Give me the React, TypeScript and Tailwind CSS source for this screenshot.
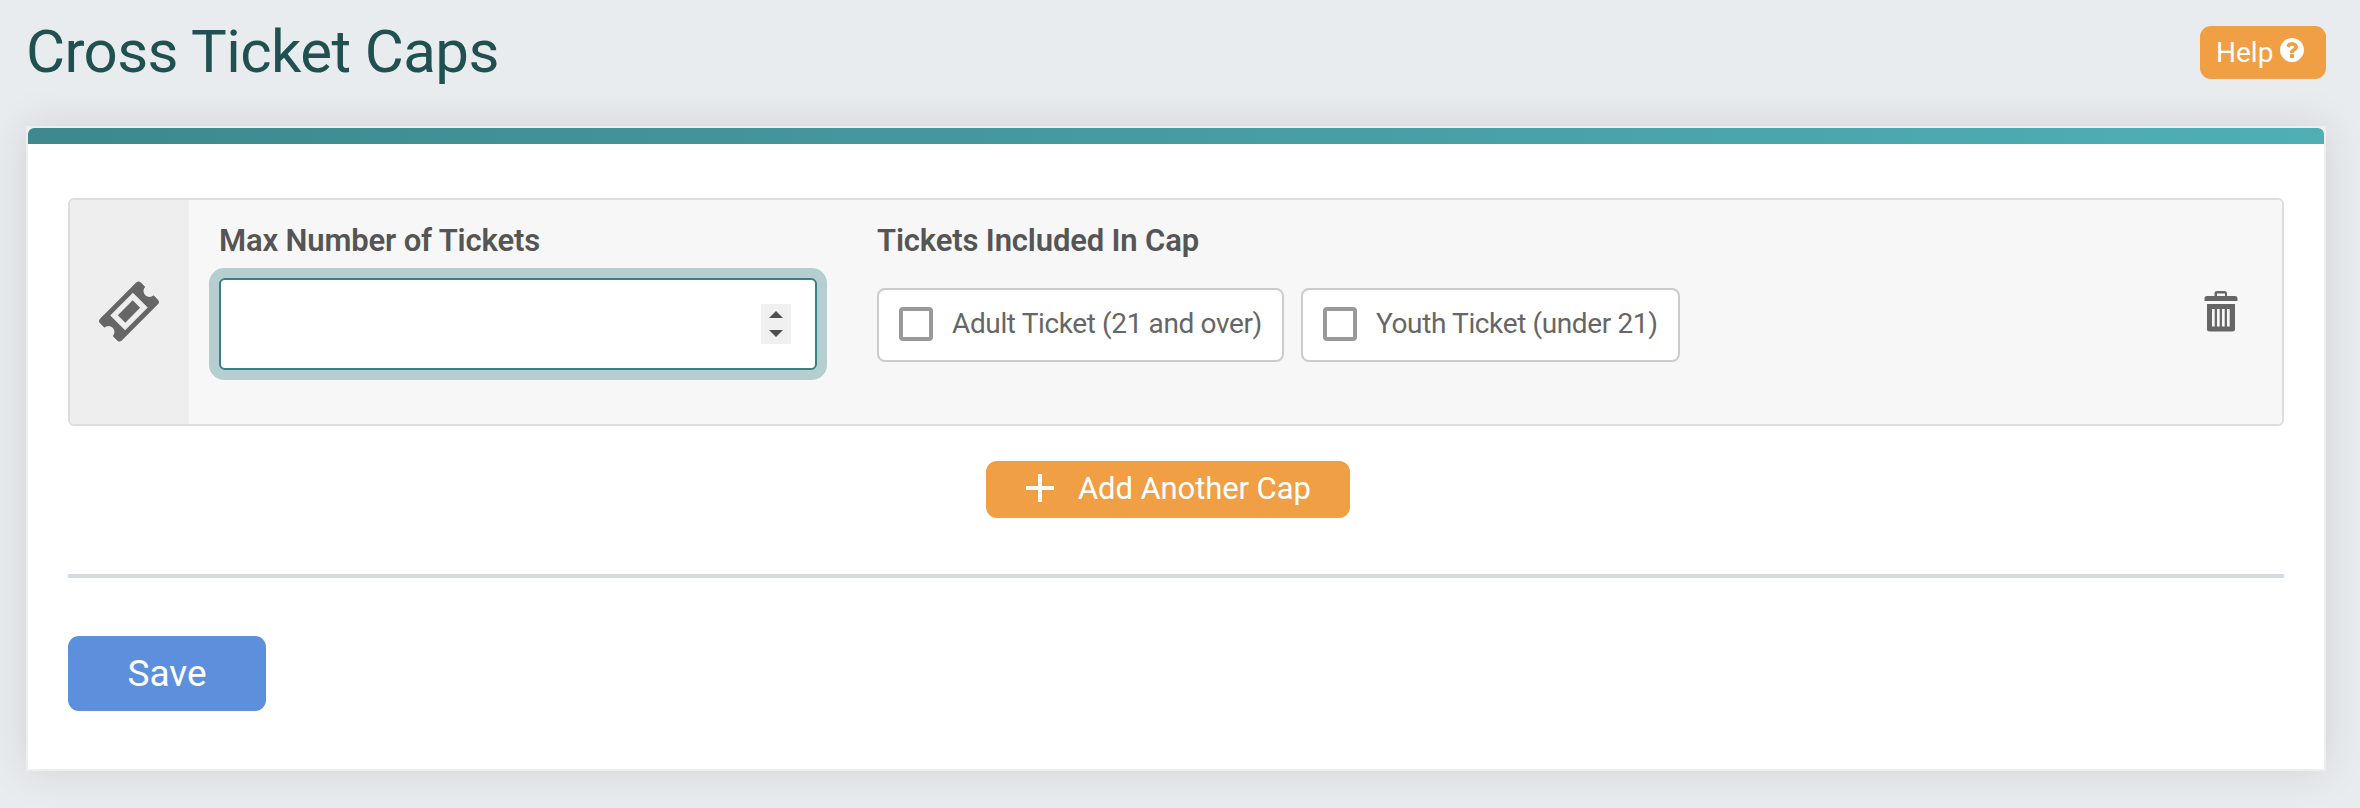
import React from 'react';

const TICKETS = ['Adult Ticket (21 and over)', 'Youth Ticket (under 21)'];

function HelpIcon() {
  return (
    <svg width="28" height="28" viewBox="0 0 1792 1792" fill="currentColor" className="ml-[5px] -mt-[5px]">
      <path d="M1024 1376v-192q0-14-9-23t-23-9h-192q-14 0-23 9t-9 23v192q0 14 9 23t23 9h192q14 0 23-9t9-23zm256-672q0-88-55.5-163t-138.5-116-170-41q-243 0-371 213-15 24 8 42l132 100q7 6 19 6 16 0 25-12 53-68 86-92 34-24 86-24 48 0 85.500 26t37.500 59q0 38-20 61t-68 45q-63 28-115.500 86.500t-52.500 125.500v36q0 14 9 23t23 9h192q14 0 23-9t9-23q0-19 21.500-49.500t54.500-49.500q32-18 49-28.500t46-35 44.500-48 28-60.500 12.500-81zm384 192q0 209-103 385.500t-279.500 279.500-385.500 103-385.500-103-279.500-279.500-103-385.500 103-385.500 279.500-279.500 385.500-103 385.500 103 279.500 279.500 103 385.500z" />
    </svg>
  );
}

function TicketIcon() {
  return (
    <svg width="58" height="31" viewBox="0 0 58 31" fill="currentColor" className="-rotate-45">
      <path
        fillRule="evenodd"
        d="M4 0H54Q58 0 58 4V9.500A6 6 0 0 0 58 21.500V27Q58 31 54 31H4Q0 31 0 27V21.500A6 6 0 0 0 0 9.500V4Q0 0 4 0ZM13 5V26H45V5ZM18.500 10.250H39.500V20.750H18.500Z"
      />
    </svg>
  );
}

function TrashIcon() {
  return (
    <svg width="34" height="42" viewBox="0 0 34 42" fill="#666666">
      <path fillRule="evenodd" d="M10.500 5V2.500Q10.500 0 13 0H20.500Q23 0 23 2.500V5H31Q33.500 5 33.500 7.500V10H0.500V7.500Q0.500 5 3 5ZM13 2.500V5H21V2.500Z" />
      <path fillRule="evenodd" d="M3 13H31V38Q31 40.500 28.500 40.500H5.500Q3 40.500 3 38ZM8 18V35.500H10.700V18ZM13 18V35.500H15.700V18ZM18 18V35.500H20.700V18ZM23 18V35.500H25.700V18Z" />
    </svg>
  );
}

export default function App() {
  return (
    <div className="h-[808px] w-[2360px] overflow-hidden bg-[#e8ecef] font-['Roboto',sans-serif] pl-[26px] pr-[34px]">
      <header className="flex h-[126px] items-start justify-between">
        <h1 className="pt-[17px] text-[60px] leading-[70px] tracking-[-0.6px] text-[#205050]">Cross Ticket Caps</h1>
        <button className="mt-[26px] flex h-[53px] w-[126px] items-center rounded-[11px] bg-[#f09f45] pl-4 text-[28px] text-white">
          Help
          <HelpIcon />
        </button>
      </header>

      <main className="h-[645px] border-2 border-[#eeeeee] bg-white shadow-[0_0_40px_rgba(0,0,0,0.1)]">
        <div className="h-4 rounded-t-md bg-linear-to-r from-[#3d898d] to-[#4fafb5]" />

        <div className="px-10 pt-[54px]">
          <section className="flex h-[228px] overflow-hidden rounded-md border-2 border-[#dddddd] bg-[#f7f7f7]">
            <div className="flex w-[119px] items-center justify-center bg-[#eeeeee] pb-px pr-px text-[#666666]">
              <TicketIcon />
            </div>

            <div className="ml-[30px] w-[598px] pt-[21px]">
              <label className="block text-[31px] font-semibold leading-[40px] tracking-[-0.15px] text-[#555555]">Max Number of Tickets</label>
              <div className="mt-[17px] flex h-[92px] items-center justify-end rounded-md border-2 border-[#3a7f83] bg-white pr-6 shadow-[0_0_0_10px_#b5cecf]">
                <div className="flex h-10 w-[30px] flex-col items-center justify-between bg-[#f0f0f0] py-[7px]">
                  <svg width="14" height="7" viewBox="0 0 14 7" fill="#505050"><path d="M0 7L7 0L14 7Z" /></svg>
                  <svg width="14" height="7" viewBox="0 0 14 7" fill="#505050"><path d="M0 0L7 7L14 0Z" /></svg>
                </div>
              </div>
            </div>

            <div className="ml-[60px] pt-[21px]">
              <h2 className="text-[31px] font-semibold leading-[40px] tracking-[-0.15px] text-[#555555]">Tickets Included In Cap</h2>
              <div className="mt-[27px] flex gap-[17px]">
                {TICKETS.map((name) => (
                  <label key={name} className="flex h-[74px] items-center rounded-lg border-2 border-[#cccccc] bg-white px-5 pb-[2px] text-[28px] tracking-[-0.37px] text-[#666666]">
                    <span className="mr-[19px] h-[34px] w-[34px] rounded-[4px] border-4 border-[#999999]" />
                    <span>{name}</span>
                  </label>
                ))}
              </div>
            </div>

            <div className="ml-auto mr-[44px] flex items-center">
              <TrashIcon />
            </div>
          </section>

          <div className="pl-[918px] pt-[35px]">
            <button className="flex h-[57px] w-[364px] items-center rounded-[11px] bg-[#f09f45] pl-10 text-[31px] tracking-[-0.1px] text-white">
              <svg width="28" height="28" viewBox="0 0 28 28" fill="currentColor" className="-mt-[3px] mr-6"><path d="M12 0H16V12H28V16H16V28H12V16H0V12H12Z" /></svg>
              <span>Add Another Cap</span>
            </button>
          </div>

          <hr className="mt-14 border-t-4 border-[#d3dbde]" />

          <button className="mt-[58px] h-[75px] w-[198px] rounded-[11px] bg-[#5d90dc] text-[37px] text-white">Save</button>
        </div>
      </main>
    </div>
  );
}
